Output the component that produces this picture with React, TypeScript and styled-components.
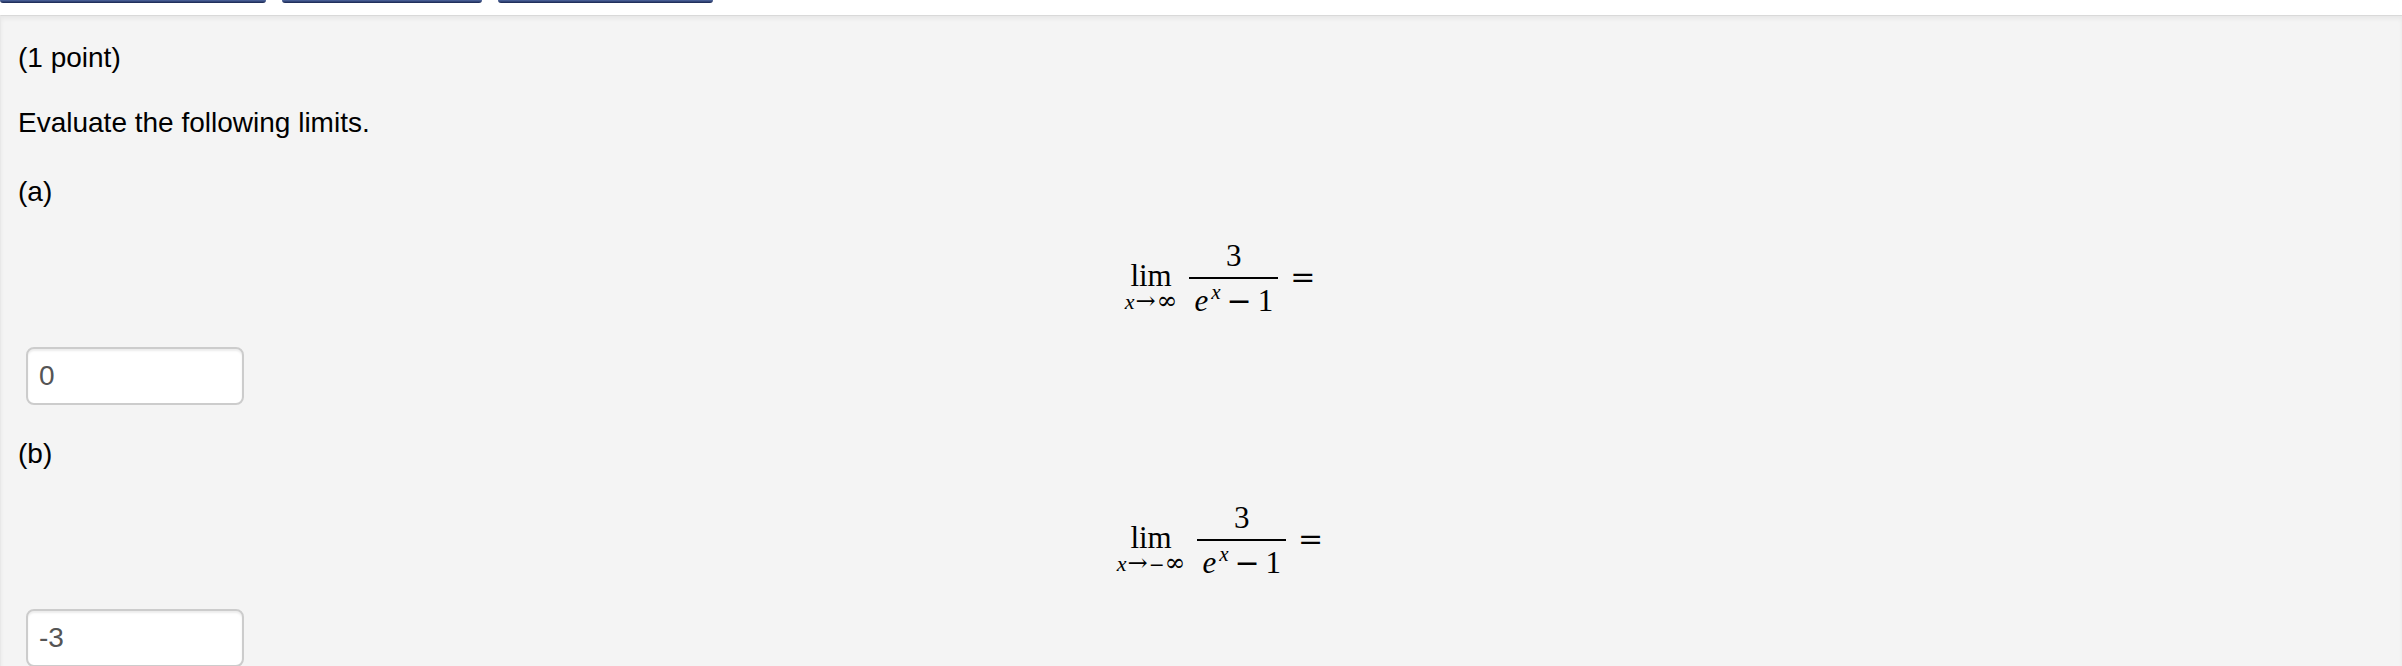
import React from "react";
import styled, { createGlobalStyle } from "styled-components";

const Global = createGlobalStyle`
  html, body {
    margin: 0;
    padding: 0;
    background: #ffffff;
    overflow: hidden;
  }
  body {
    font-family: "Liberation Sans", Arial, Helvetica, sans-serif;
    color: #000;
  }
`;

const Page = styled.div`
  width: 2402px;
  height: 666px;
  overflow: hidden;
  display: flex;
  flex-direction: column;
`;

const NavStrip = styled.nav`
  display: flex;
  gap: 16px;
  height: 15px;
  align-items: flex-start;
  flex-shrink: 0;
`;

const NavButton = styled.div<{ $w: number }>`
  width: ${(p) => p.$w}px;
  height: 3px;
  background: linear-gradient(#4f67a0, #18254f);
  border-radius: 0 0 6px 6px;
`;

const Panel = styled.main`
  flex: 1;
  background: #f4f4f4;
  border-top: 1px solid #d9d9d9;
  border-left: 1px solid #e8e8e8;
  box-shadow: inset 0 3px 4px rgba(0, 0, 0, 0.05);
  padding: 22px 18px 0 17px;
  font-size: 28px;
  line-height: 40px;
`;

const Points = styled.div``;

const Prompt = styled.p`
  margin: 25px 0 0;
`;

const PartLabel = styled.div`
  margin-top: 29px;
`;

const MathRow = styled.div`
  margin-top: 27px;
  display: flex;
  justify-content: center;
  align-items: flex-start;
  padding-left: 38px;
  font-family: "Liberation Serif", "DejaVu Serif", serif;
  color: #000;
`;

const LimGroup = styled.span`
  display: inline-flex;
  flex-direction: column;
  align-items: center;
  margin-top: 21px;
  margin-right: 12px;
`;

const LimWord = styled.span`
  font-size: 31px;
  line-height: 31px;
`;

const LimSub = styled.span`
  font-size: 22px;
  line-height: 20px;
  white-space: nowrap;
`;

const MathVar = styled.i`
  font-style: italic;
`;

const Op = styled.span`
  font-family: "DejaVu Serif", serif;
`;

const Arrow = styled(Op)`
  font-size: 24px;
  margin: 0 1px;
`;

const SubMinus = styled(Op)`
  font-size: 19px;
`;

const Infinity = styled(Op)`
  font-size: 25px;
`;

const Fraction = styled.span`
  display: inline-flex;
  flex-direction: column;
  align-items: stretch;
`;

const Num = styled.span`
  font-size: 31px;
  line-height: 34px;
  padding: 0 5px 4px;
  text-align: center;
`;

const Bar = styled.span`
  height: 2px;
  background: #000;
`;

const Den = styled.span`
  font-size: 31px;
  line-height: 34px;
  padding: 5px 5px 0;
  text-align: center;
  white-space: nowrap;
`;

const Sup = styled.i`
  font-size: 21px;
  font-style: italic;
  vertical-align: 12px;
  line-height: 0;
  margin-left: 3px;
`;

const Minus = styled(Op)`
  font-size: 30px;
  margin: 0 6px;
`;

const Equals = styled(Op)`
  font-size: 30px;
  line-height: 34px;
  margin-top: 21px;
  margin-left: 12px;
`;

const AnswerInput = styled.input`
  display: block;
  box-sizing: border-box;
  margin: 29px 0 0 8px;
  width: 218px;
  height: 58px;
  border: 2px solid #cccccc;
  border-radius: 8px;
  background: #ffffff;
  padding: 0 11px;
  font-family: "Liberation Sans", Arial, Helvetica, sans-serif;
  font-size: 28px;
  color: #555555;
  box-shadow: inset 0 2px 2px rgba(0, 0, 0, 0.075);
  outline: none;
`;

type PartProps = {
  label: string;
  negative: boolean;
  answer: string;
};

const Part: React.FC<PartProps> = ({ label, negative, answer }) => (
  <>
    <PartLabel>{label}</PartLabel>
    <MathRow>
      <LimGroup>
        <LimWord>lim</LimWord>
        <LimSub>
          <MathVar>x</MathVar>
          <Arrow>→</Arrow>
          {negative && <SubMinus>−</SubMinus>}
          <Infinity>∞</Infinity>
        </LimSub>
      </LimGroup>
      <Fraction>
        <Num>3</Num>
        <Bar />
        <Den>
          <MathVar>e</MathVar>
          <Sup>x</Sup>
          <Minus>−</Minus>1
        </Den>
      </Fraction>
      <Equals>=</Equals>
    </MathRow>
    <AnswerInput type="text" readOnly value={answer} />
  </>
);

export default function App() {
  return (
    <Page>
      <Global />
      <NavStrip>
        <NavButton $w={266} />
        <NavButton $w={200} />
        <NavButton $w={215} />
      </NavStrip>
      <Panel>
        <Points>(1 point)</Points>
        <Prompt>Evaluate the following limits.</Prompt>
        <Part label="(a)" negative={false} answer="0" />
        <Part label="(b)" negative={true} answer="-3" />
      </Panel>
    </Page>
  );
}
